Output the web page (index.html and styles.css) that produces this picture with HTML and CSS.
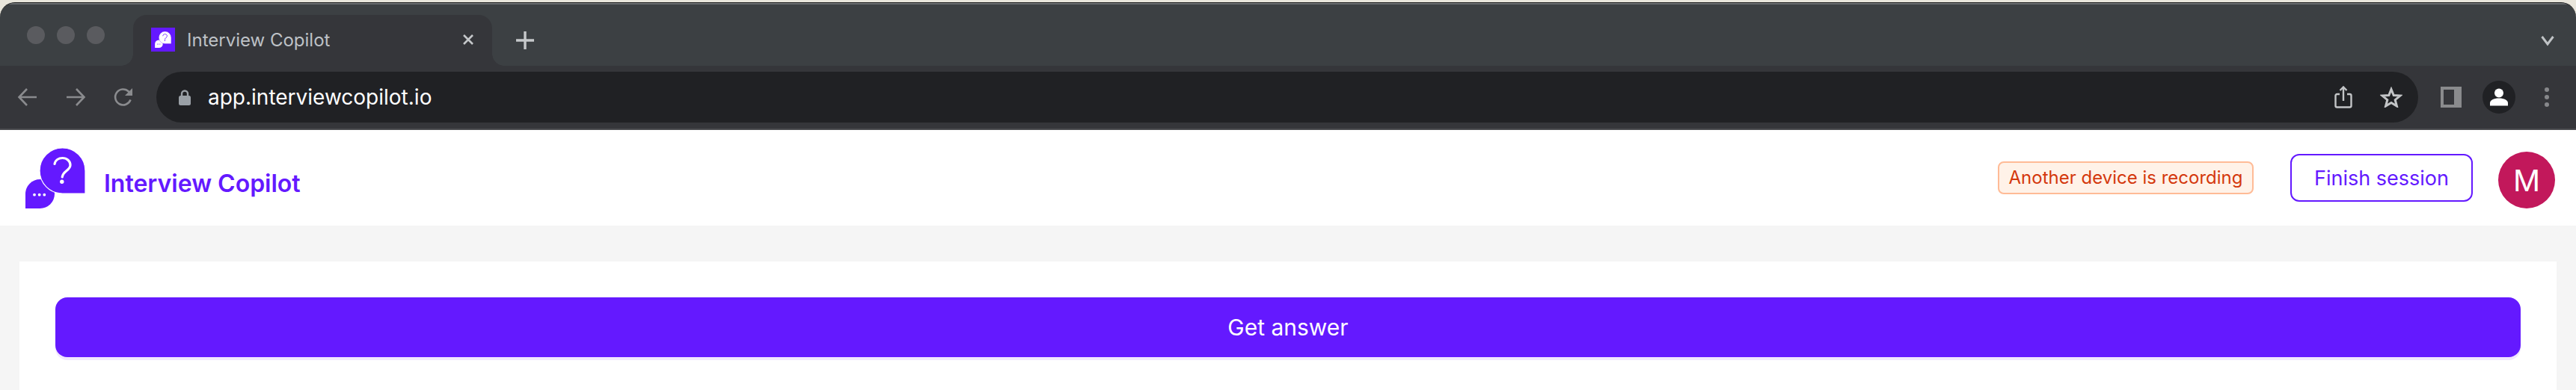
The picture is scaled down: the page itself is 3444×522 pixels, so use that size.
FILE: index.html
```html
<!DOCTYPE html>
<html lang="en">
<head>
    <meta charset="UTF-8">
    <title>Interview Copilot</title>
    <link rel="stylesheet" href="styles.css">
</head>
<body>
    <svg class="sprites" width="0" height="0">
        <symbol id="copilot-mark" viewBox="0 0 80 81">
            <path class="bubble" d="M0 61.5A19.5 19.5 0 1 1 19.5 81H0Z"/>
            <g class="mark-dots">
                <circle cx="12" cy="62.7" r="1.9"/>
                <circle cx="18.7" cy="62.7" r="1.9"/>
                <circle cx="25.3" cy="62.7" r="1.9"/>
            </g>
            <path class="bubble bubble-front" d="M80 30.5V61H49.5A30.5 30.5 0 1 1 80 30.5Z"/>
            <path class="mark-line" d="M39 21.5C40 16 44.500 13.500 49.500 13.500C55.500 13.500 60 17.500 60 23C60 30 50 31 49.200 39"/>
            <circle class="mark-fill" cx="48.800" cy="45.300" r="2.700"/>
        </symbol>
    </svg>

    <!-- Browser frame -->
    <div class="window">
        <div class="tab-strip">
            <div class="traffic-lights">
                <span></span>
                <span></span>
                <span></span>
            </div>
            <div class="tab">
                <svg class="favicon"><use href="#copilot-mark" x="5" y="5" width="22" height="22"/></svg>
                <span class="tab-title">Interview Copilot</span>
                <svg class="tab-close" viewBox="0 0 16 16"><path d="M2 2L14 14M14 2L2 14"/></svg>
            </div>
            <svg class="new-tab" viewBox="0 0 26 26"><path d="M13 1V25M1 13H25"/></svg>
            <svg class="tab-menu" viewBox="0 0 18 16"><path d="M1.500 3L9 13L16.500 3"/></svg>
        </div>

        <div class="toolbar">
            <svg class="nav-icon" viewBox="0 0 28 28"><path d="M26 14H3M13 3L2.500 14L13 25"/></svg>
            <svg class="nav-icon" viewBox="0 0 28 28"><path d="M2 14H25M15 3L25.500 14L15 25"/></svg>
            <svg class="nav-icon" viewBox="0 0 28 28"><path d="M23.500 17.500A10.500 10.500 0 1 1 21 6.500L24 9.500"/><path class="solid" d="M26 2V12H16Z"/></svg>
            <div class="omnibox">
                <svg class="lock" viewBox="0 0 16 22"><path class="lock-loop" d="M4 10V6.500A4 4 0 0 1 12 6.500V10"/><rect y="9" width="16" height="13" rx="2.500"/></svg>
                <span class="url">app.interviewcopilot.io</span>
                <svg class="omni-icon" viewBox="0 0 24 30"><path d="M7 11H3.500A2 2 0 0 0 1.500 13V26.500A2 2 0 0 0 3.500 28.500H20.500A2 2 0 0 0 22.500 26.500V13A2 2 0 0 0 20.500 11H17M12 20V2M7.500 6L12 1.500L16.500 6"/></svg>
                <svg class="omni-icon star" viewBox="0 0 30 28"><path d="M15 3.500L18.200 11.500L27 12.100L20.200 17.700L22.400 26L15 21.500L7.600 26L9.800 17.700L3 12.100L11.800 11.500Z"/></svg>
            </div>
            <div class="side-panel"><span></span></div>
            <div class="profile">
                <svg viewBox="0 0 24 24"><circle cx="12" cy="6.500" r="6"/><path d="M0 23.500V20C0 16 5 13.500 12 13.500S24 16 24 20V23.500Z"/></svg>
            </div>
            <div class="kebab">
                <span></span>
                <span></span>
                <span></span>
            </div>
        </div>
    </div>

    <!-- App -->
    <header class="app-header">
        <a class="brand" href="#">
            <svg class="brand-logo"><use href="#copilot-mark"/></svg>
            <span class="brand-name">Interview Copilot</span>
        </a>
        <div class="header-actions">
            <span class="status-badge">Another device is recording</span>
            <button class="finish-btn">Finish session</button>
            <span class="avatar">M</span>
        </div>
    </header>

    <main class="content">
        <section class="card">
            <button class="answer-btn">Get answer</button>
        </section>
    </main>
</body>
</html>
```

FILE: styles.css
```css
* {
    box-sizing: border-box;
}

html, body {
    height: 100%;
}

body {
    margin: 0;
    display: flex;
    flex-direction: column;
    overflow: hidden;
    background-color: #e9e6dc;
    font-family: Inter, 'Liberation Sans', sans-serif;
}

.sprites {
    position: absolute;
}

.bubble {
    fill: var(--bubble);
}

.bubble-front {
    stroke: var(--mark);
    stroke-width: 1.2;
}

.mark-dots, .mark-fill {
    fill: var(--mark);
}

.mark-line {
    fill: none;
    stroke: var(--mark);
    stroke-width: 3.2;
    stroke-linecap: round;
}

/* Browser frame */
.window {
    flex: none;
    margin-top: 3px;
    border-top: 1px solid #1f2021;
    border-radius: 20px 20px 0 0;
    overflow: hidden;
    background-color: #3c4043;
}

.tab-strip {
    display: flex;
    align-items: flex-end;
    height: 84px;
    padding-right: 29px;
    box-shadow: inset 0 2px 0 #696c6f;
}

.traffic-lights {
    display: flex;
    gap: 16px;
    align-self: flex-start;
    width: 178px;
    padding: 31px 0 0 36px;
}

.traffic-lights span {
    width: 24px;
    height: 24px;
    border-radius: 50%;
    background-color: #5a5b5f;
}

.tab {
    position: relative;
    display: flex;
    align-items: center;
    width: 480px;
    height: 68px;
    padding: 0 24px 0 24px;
    border-radius: 18px 18px 0 0;
    background-color: #35363a;
}

.tab::before, .tab::after {
    content: "";
    position: absolute;
    bottom: 0;
    width: 16px;
    height: 16px;
}

.tab::before {
    left: -16px;
    background: radial-gradient(circle at 0 0, transparent 15.5px, #35363a 16px);
}

.tab::after {
    right: -16px;
    background: radial-gradient(circle at 100% 0, transparent 15.5px, #35363a 16px);
}

.favicon {
    flex: none;
    width: 32px;
    height: 32px;
    margin-bottom: 2px;
    background-color: #6419ff;
    --bubble: #fff;
    --mark: #6419ff;
}

.tab-title {
    flex: 1;
    margin-left: 16px;
    margin-bottom: 2px;
    color: #bdc1c6;
    font-size: 24px;
}

.tab-close {
    width: 16px;
    height: 16px;
    margin-bottom: 2px;
    fill: none;
    stroke: #c4c7c9;
    stroke-width: 2.6;
}

.new-tab {
    width: 26px;
    height: 26px;
    margin: 0 0 21px 31px;
    fill: none;
    stroke: #c6c9cb;
    stroke-width: 3.4;
}

.tab-menu {
    width: 18px;
    height: 16px;
    margin: 0 0 26px auto;
    fill: none;
    stroke: #c0c3c6;
    stroke-width: 3;
}

.toolbar {
    display: flex;
    align-items: center;
    height: 86px;
    padding: 0 27px 0 23px;
    border-bottom: 2px solid #4a4b4f;
    background-color: #35363a;
}

.nav-icon {
    flex: none;
    width: 28px;
    height: 28px;
    margin-right: 36px;
    fill: none;
    stroke: #8a8b8e;
    stroke-width: 2.6;
}

.nav-icon .solid {
    fill: #8a8b8e;
    stroke: none;
}

.omnibox {
    flex: none;
    display: flex;
    align-items: center;
    width: 3024px;
    height: 68px;
    margin-left: -6px;
    padding: 0 21px 0 30px;
    border-radius: 34px;
    background-color: #202124;
}

.lock {
    width: 16px;
    height: 22px;
    fill: #9aa0a6;
}

.lock .lock-loop {
    fill: none;
    stroke: #9aa0a6;
    stroke-width: 2.400;
}

.url {
    flex: 1;
    margin-left: 23px;
    color: #fff;
    font-size: 28px;
}

.omni-icon {
    width: 24px;
    height: 30px;
    margin-right: 37px;
    fill: none;
    stroke: #c3c5c7;
    stroke-width: 2.400;
}

.omni-icon.star {
    width: 30px;
    height: 28px;
    margin-right: 0;
    stroke-width: 3;
}

.side-panel {
    flex: none;
    width: 28px;
    height: 28px;
    margin-left: 30px;
    padding: 4px 10px 4px 4px;
    background-color: #8a8b8d;
}

.side-panel span {
    display: block;
    height: 100%;
    background-color: #35363a;
}

.profile {
    flex: none;
    display: flex;
    align-items: center;
    justify-content: center;
    width: 44px;
    height: 44px;
    margin-left: 28px;
    border-radius: 50%;
    background-color: #202124;
}

.profile svg {
    width: 24px;
    height: 24px;
    fill: #fff;
}

.kebab {
    flex: none;
    display: flex;
    flex-direction: column;
    gap: 4px;
    margin-left: 39px;
}

.kebab span {
    width: 6px;
    height: 6px;
    border-radius: 50%;
    background-color: #87888b;
}

/* App header */
.app-header {
    display: flex;
    align-items: center;
    justify-content: space-between;
    flex: none;
    height: 128px;
    padding: 0 28px 0 34px;
    background-color: #fff;
}

.brand {
    display: flex;
    align-items: center;
    gap: 25px;
    text-decoration: none;
}

.brand-logo {
    width: 80px;
    height: 81px;
    --bubble: #6419ff;
    --mark: #fff;
}

.brand-name {
    margin-top: 14px;
    color: #6419ff;
    font-size: 32px;
    font-weight: 600;
}

.header-actions {
    display: flex;
    align-items: center;
}

.status-badge {
    width: 342px;
    height: 44px;
    border: 2px solid #ffbb96;
    border-radius: 8px;
    background-color: #fff2e8;
    color: #d4380d;
    font-size: 24px;
    line-height: 40px;
    text-align: center;
}

.finish-btn {
    width: 244px;
    height: 64px;
    margin-left: 49px;
    border: 2px solid #6419ff;
    border-radius: 12px;
    background-color: #fff;
    color: #6419ff;
    font-family: inherit;
    font-size: 27px;
}

.avatar {
    display: flex;
    align-items: center;
    justify-content: center;
    width: 76px;
    height: 76px;
    margin: 6px 0 0 34px;
    border-radius: 50%;
    background-color: #c2185b;
    color: #fff;
    font-size: 40px;
}

/* Main content */
.content {
    flex: none;
    display: flex;
    padding: 48px 26px 0;
    background-color: #f5f5f5;
}

.card {
    flex: 1;
    padding: 48px;
    background-color: #fff;
}

.answer-btn {
    display: block;
    width: 100%;
    height: 80px;
    border: none;
    border-radius: 16px;
    background-color: #6419ff;
    box-shadow: 0 4px 0 #f1e6ff;
    color: #fff;
    font-family: inherit;
    font-size: 30px;
}
```
